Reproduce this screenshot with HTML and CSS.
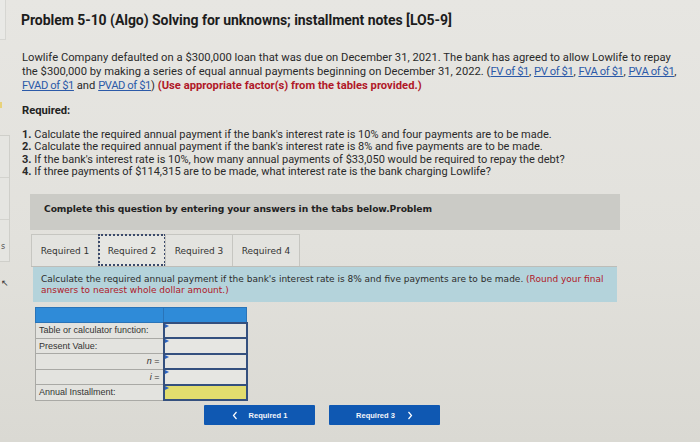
FILE: index.html
```html
<!DOCTYPE html>
<html>
<head>
<meta charset="utf-8">
<link rel="stylesheet" href="styles.css">
</head>
<body>
<div class="page">
  <aside class="gutter">
    <div class="gutter-top"></div>
    <div class="gutter-mark"></div>
    <div class="gutter-panel">
      <div class="gp-cell"></div>
      <div class="gp-cell"></div>
      <div class="gp-cell gp-last"><span>s</span></div>
    </div>
    <div class="gutter-arrow">&#8598;</div>
  </aside>
  <main class="main">
    <h1 class="title">Problem 5-10 (Algo) Solving for unknowns; installment notes [LO5-9]</h1>
    <p class="intro">Lowlife Company defaulted on a $300,000 loan that was due on December 31, 2021. The bank has agreed to allow Lowlife to repay<br>the $300,000 by making a series of equal annual payments beginning on December 31, 2022. (<a href="#">FV of $1</a>, <a href="#">PV of $1</a>, <a href="#">FVA of $1</a>, <a href="#">PVA of $1</a>,<br><a href="#">FVAD of $1</a> and <a href="#">PVAD of $1</a>) <strong class="red">(Use appropriate factor(s) from the tables provided.)</strong></p>
    <p class="req-label">Required:</p>
    <ol class="req-list">
      <li><b>1.</b> Calculate the required annual payment if the bank's interest rate is 10% and four payments are to be made.</li>
      <li><b>2.</b> Calculate the required annual payment if the bank's interest rate is 8% and five payments are to be made.</li>
      <li><b>3.</b> If the bank's interest rate is 10%, how many annual payments of $33,050 would be required to repay the debt?</li>
      <li><b>4.</b> If three payments of $114,315 are to be made, what interest rate is the bank charging Lowlife?</li>
    </ol>
    <div class="complete-box">Complete this question by entering your answers in the tabs below.Problem</div>
    <div class="tabs">
      <div class="tab">Required 1</div>
      <div class="tab tab-active">Required 2</div>
      <div class="tab">Required 3</div>
      <div class="tab">Required 4</div>
    </div>
    <div class="info">Calculate the required annual payment if the bank's interest rate is 8% and five payments are to be made. <span class="red">(Round your final<br>answers to nearest whole dollar amount.)</span></div>
    <table class="calc">
      <tr class="head"><th></th><th></th></tr>
      <tr><td class="lbl">Table or calculator function:</td><td class="inp"><i class="flag"></i></td></tr>
      <tr><td class="lbl">Present Value:</td><td class="inp"><i class="flag"></i></td></tr>
      <tr><td class="lbl right"><em>n</em> =</td><td class="inp"><i class="flag"></i></td></tr>
      <tr><td class="lbl right"><em>i</em> =</td><td class="inp"><i class="flag"></i></td></tr>
      <tr><td class="lbl">Annual Installment:</td><td class="inp yellow"><i class="flag"></i></td></tr>
    </table>
    <div class="nav">
      <button class="navbtn"><svg class="chev" width="6" height="9" viewBox="0 0 6 9"><path d="M4.5 1 L1.5 4.5 L4.5 8" fill="none" stroke="#fff" stroke-width="1.2"/></svg>Required 1</button>
      <button class="navbtn">Required 3<svg class="chev chev-r" width="6" height="9" viewBox="0 0 6 9"><path d="M1.5 1 L4.5 4.5 L1.5 8" fill="none" stroke="#fff" stroke-width="1.2"/></svg></button>
    </div>
  </main>
</div>
</body>
</html>
```
FILE: styles.css
```css
* { box-sizing: border-box; }
html, body { margin: 0; padding: 0; }
body {
  width: 700px;
  height: 442px;
  overflow: hidden;
  background: linear-gradient(180deg, #e7e6e2 0%, #e2e1dc 55%, #dad9d3 100%);
  font-family: Roboto, "Liberation Sans", sans-serif;
  color: #222;
}
.page { display: flex; height: 442px; }

.gutter { width: 11px; flex: none; }
.gutter-top { height: 40px; width: 6px; background: #e9e9e6; border-right: 1px solid #d6d6d2; border-bottom: 1px solid #d6d6d2; }
.gutter-mark { margin-top: 62px; width: 2px; height: 6px; background: #e8d27a; }
.gutter-panel { margin-top: 27px; width: 10px; border: 1px solid #cfcfca; border-left: none; background: #e5e5e1; }
.gp-cell { height: 42px; border-bottom: 1px solid #d3d3ce; position: relative; }
.gp-last { border-bottom: none; height: 41px; }
.gp-last span { position: absolute; left: 1px; top: 22px; font-size: 8px; color: #555; font-family: "DejaVu Sans", sans-serif; }
.gutter-arrow { margin-top: 16px; font-size: 9px; color: #333; padding-left: 1px; line-height: 10px; }

.main { flex: 1; padding-left: 10px; padding-top: 11px; }

.title {
  margin: 0;
  font-size: 14px;
  font-weight: 700;
  line-height: 18px;
  letter-spacing: -0.05px;
  color: #1c1c1c;
  white-space: nowrap;
}
.intro {
  margin: 22px 0 0 1px;
  font-size: 11.2px;
  line-height: 14px;
  letter-spacing: 0.02px;
  color: #2a2a2a;
  white-space: nowrap;
}
.intro a { color: #2c5aa8; text-decoration: underline; letter-spacing: -0.4px; }
.red { color: #b01828; }
.intro strong { font-weight: 700; }
.req-label {
  margin: 11px 0 0 1px;
  font-size: 11.2px;
  line-height: 14px;
  font-weight: 700;
  color: #222;
}
.req-list {
  list-style: none;
  margin: 11px 0 0 1px;
  padding: 0;
  font-size: 11px;
  line-height: 12.3px;
  color: #2a2a2a;
  white-space: nowrap;
}
.complete-box {
  margin: 16px 0 0 9px;
  width: 590px;
  height: 36px;
  background: #cbcbc6;
  padding: 9px 0 0 14px;
  font-family: "DejaVu Sans", Verdana, sans-serif;
  font-weight: 700;
  font-size: 9.2px;
  letter-spacing: -0.1px;
  color: #222;
  white-space: nowrap;
}
.tabs {
  display: flex;
  margin: 4px 0 0 10px;
  height: 33px;
  width: 586px;
  border-bottom: 1px solid #bdbdb8;
}
.tab {
  width: 68px;
  height: 32px;
  background: #e3e3df;
  border: 1px solid #c6c6c1;
  border-bottom: none;
  margin-right: -1px;
  font-family: "DejaVu Sans", Verdana, sans-serif;
  font-size: 9px;
  color: #333;
  display: flex;
  align-items: center;
  justify-content: center;
}
.tab-active { background: #e6e6e2; outline: 2px dotted #3b4a6b; outline-offset: -2px; }
.info {
  margin: 0 0 0 12px;
  width: 584px;
  height: 35px;
  background: #b4d3db;
  padding: 7px 0 0 8px;
  font-family: "DejaVu Sans", Verdana, sans-serif;
  font-size: 9px;
  line-height: 11px;
  color: #2c2c2c;
  white-space: nowrap;
}
.calc {
  margin: 5px 0 0 14px;
  border-collapse: collapse;
  font-family: "Liberation Sans", Arial, sans-serif;
  font-size: 9px;
  color: #333;
}
.calc th {
  height: 15px;
  background: #2f8bd8;
  border: 1px solid #2a74b8;
  padding: 0;
}
.calc th:first-child { width: 128px; }
.calc th:last-child { width: 83px; }
.calc td { height: 15.5px; padding: 0 3px; }
.lbl { background: #e3e3df; border: 1px solid #a9a9a5; }
.right { text-align: right; }
.lbl em { font-style: italic; }
.inp { background: #e6e6e2; border: 2px solid #34507e; position: relative; }
.yellow { background: #e2dd6e; }
.flag {
  position: absolute;
  left: 0; top: 0;
  width: 0; height: 0;
  border-top: 2.5px solid transparent;
  border-bottom: 2.5px solid transparent;
  border-left: 4px solid #2a62c0;
}
.nav {
  display: flex;
  gap: 14px;
  margin: 4px 0 0 183px;
}
.navbtn {
  width: 111px;
  height: 20px;
  background: #0f58b2;
  border: none;
  border-radius: 1px;
  color: #f4f6fa;
  font-family: "Liberation Sans", Arial, sans-serif;
  font-weight: 700;
  font-size: 7.5px;
  display: flex;
  align-items: center;
  justify-content: center;
  padding: 0;
}
.chev { margin-right: 11px; }
.chev-r { margin-right: 0; margin-left: 12px; }
```
